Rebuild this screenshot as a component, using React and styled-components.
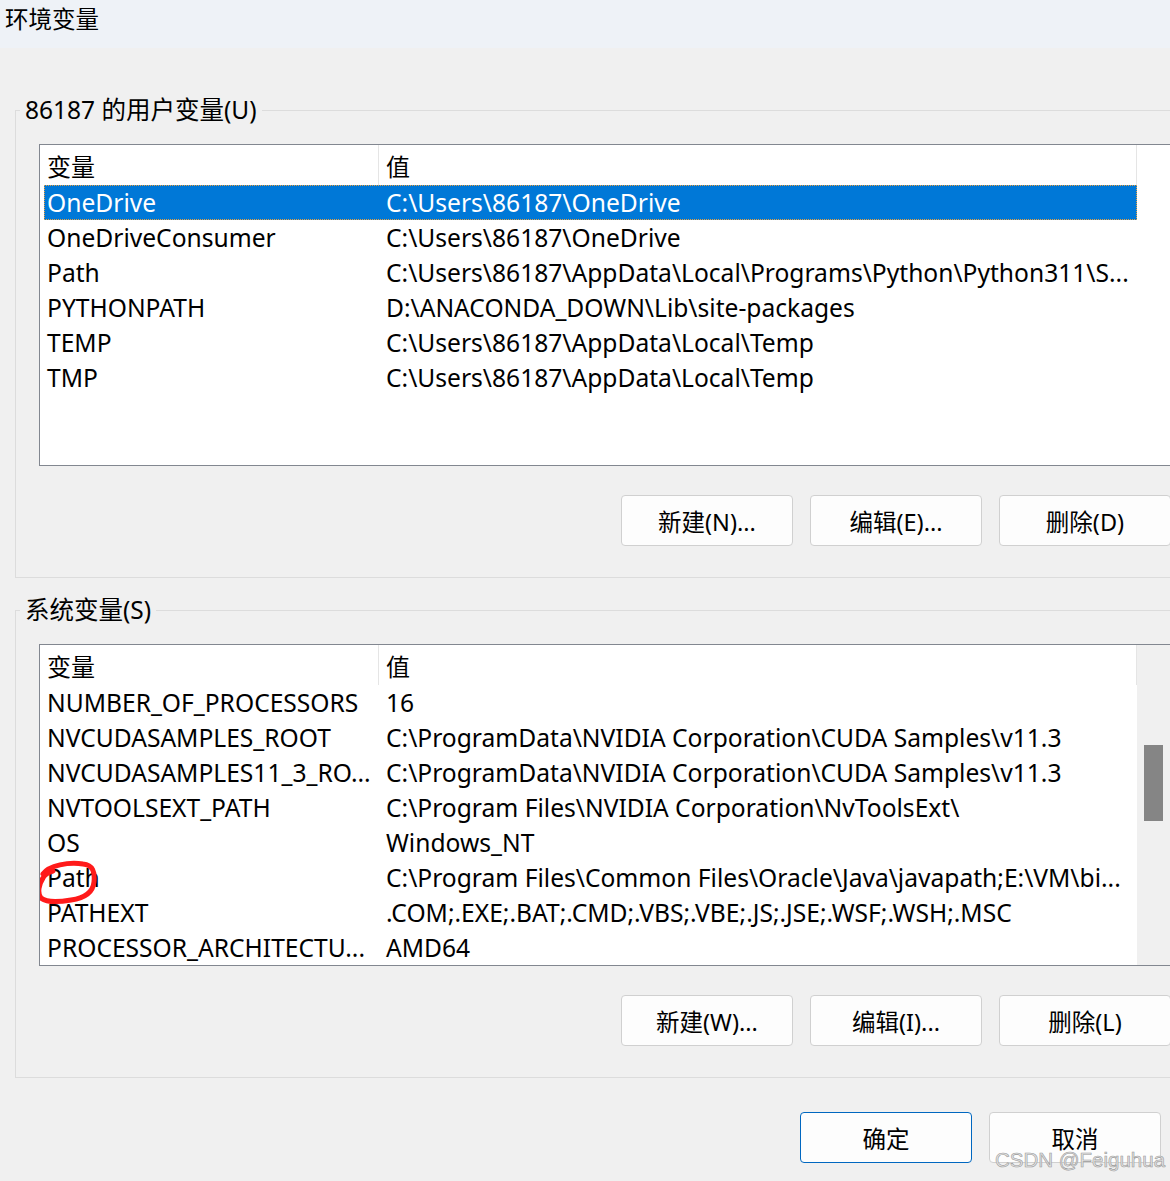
import React from 'react';
import styled, { createGlobalStyle } from 'styled-components';

const GlobalStyle = createGlobalStyle`
  html, body {
    margin: 0;
    padding: 0;
    background: #f0f0f0;
    overflow: hidden;
  }
  body {
    font-family: "Noto Sans", "Noto Sans CJK SC", sans-serif;
    color: #000;
  }
`;

const Window = styled.div`
  position: relative;
  width: 1200px;
  height: 1181px;
  background: #f0f0f0;
`;

const TitleBar = styled.div`
  height: 48px;
  box-sizing: border-box;
  background: #eef2f7;
  padding: 2px 0 0 5px;
  font-size: 23.5px;
  line-height: 32px;
  font-family: "Noto Sans CJK SC", sans-serif;
`;

const GroupBox = styled.fieldset`
  margin: ${p => p.$top}px 5px 0 15px;
  padding: 18px 23px 31px 23px;
  border: 1px solid #dcdcdc;
  border-radius: 0;
  min-width: 0;
`;

const Legend = styled.legend`
  font-size: 24.5px;
  line-height: 32px;
  padding: 0 5px;
  margin-left: -19px;
`;

const ListView = styled.div`
  height: 322px;
  box-sizing: border-box;
  border: 1px solid #828790;
  background: #fff;
  display: flex;
  overflow: hidden;
`;

const Table = styled.div`
  width: 1097px;
  padding-left: 4px;
  box-sizing: border-box;
  flex-shrink: 0;
`;

const HeaderRow = styled.div`
  display: grid;
  grid-template-columns: 335px 1fr;
  height: 40px;
`;

const HeaderCell = styled.div`
  display: flex;
  align-items: center;
  padding-left: ${p => (p.$first ? 3 : 7)}px;
  border-right: 1px solid #e5e5e5;
  font-size: 24px;
  font-family: "Noto Sans CJK SC", sans-serif;
`;

const Row = styled.div`
  display: grid;
  grid-template-columns: 335px 1fr;
  height: 35px;
  box-sizing: border-box;
  background: ${p => (p.$selected ? '#0078d7' : 'transparent')};
  color: ${p => (p.$selected ? '#fff' : '#000')};
  outline: ${p => (p.$selected ? '1px dotted #e8a040' : 'none')};
  outline-offset: -1px;
`;

const Cell = styled.div`
  position: relative;
  display: flex;
  align-items: center;
  padding-left: ${p => (p.$first ? 3 : 7)}px;
  font-size: 24.6px;
  white-space: nowrap;
  overflow: ${p => (p.$first ? 'visible' : 'hidden')};
`;

const Gutter = styled.div`
  flex: 1;
  background: ${p => (p.$scroll ? '#f0f0f0' : '#fff')};
  display: flex;
  justify-content: center;
`;

const Thumb = styled.div`
  margin-top: 100px;
  width: 19px;
  height: 76px;
  background: #858585;
`;

const ButtonRow = styled.div`
  display: flex;
  justify-content: flex-end;
  gap: 17px;
  margin-top: ${p => p.$top}px;
  padding-right: ${p => p.$right || 0}px;
`;

const Button = styled.button`
  width: 172px;
  height: 51px;
  box-sizing: border-box;
  background: #fdfdfd;
  border: 1px solid ${p => (p.$primary ? '#0067c0' : '#d0d0d0')};
  border-radius: 4px;
  font-family: "Noto Sans", "Noto Sans CJK SC", sans-serif;
  font-size: 23.5px;
  color: #000;
  padding: 0;
`;

const Circle = styled.svg`
  position: absolute;
  left: -9px;
  top: 0px;
  pointer-events: none;
`;

const Watermark = styled.div`
  position: absolute;
  left: 995px;
  top: 1148px;
  font-family: "Liberation Sans", sans-serif;
  font-size: 20.5px;
  color: #e4e4e4;
  -webkit-text-stroke: 0.6px #9a9a9a;
`;

const userVars = [
  ['OneDrive', 'C:\\Users\\86187\\OneDrive', true],
  ['OneDriveConsumer', 'C:\\Users\\86187\\OneDrive'],
  ['Path', 'C:\\Users\\86187\\AppData\\Local\\Programs\\Python\\Python311\\S...'],
  ['PYTHONPATH', 'D:\\ANACONDA_DOWN\\Lib\\site-packages'],
  ['TEMP', 'C:\\Users\\86187\\AppData\\Local\\Temp'],
  ['TMP', 'C:\\Users\\86187\\AppData\\Local\\Temp'],
];

const sysVars = [
  ['NUMBER_OF_PROCESSORS', '16'],
  ['NVCUDASAMPLES_ROOT', 'C:\\ProgramData\\NVIDIA Corporation\\CUDA Samples\\v11.3'],
  ['NVCUDASAMPLES11_3_RO...', 'C:\\ProgramData\\NVIDIA Corporation\\CUDA Samples\\v11.3'],
  ['NVTOOLSEXT_PATH', 'C:\\Program Files\\NVIDIA Corporation\\NvToolsExt\\'],
  ['OS', 'Windows_NT'],
  ['Path', 'C:\\Program Files\\Common Files\\Oracle\\Java\\javapath;E:\\VM\\bi...', false, true],
  ['PATHEXT', '.COM;.EXE;.BAT;.CMD;.VBS;.VBE;.JS;.JSE;.WSF;.WSH;.MSC'],
  ['PROCESSOR_ARCHITECTU...', 'AMD64'],
];

// hand-drawn red ring round the "Path" entry
const RedCircle = () => (
  <Circle width="66" height="46" viewBox="0 0 66 46">
    <path
      d="M8 14 C14 5 34 2 48 4 C58 5 60 12 59 22 C58 32 50 38 36 40 C24 42 12 43 6 38 C2 33 4 24 8 18 C10 14 14 12 18 11"
      fill="none"
      stroke="#ff1a1a"
      strokeWidth="5"
      strokeLinecap="round"
      strokeLinejoin="round"
    />
  </Circle>
);

const VarList = ({ rows, scroll }) => (
  <ListView>
    <Table>
      <HeaderRow>
        <HeaderCell $first>变量</HeaderCell>
        <HeaderCell>值</HeaderCell>
      </HeaderRow>
      {rows.map(([name, value, selected, marked]) => (
        <Row key={name + value} $selected={selected}>
          <Cell $first>
            {name}
            {marked && <RedCircle />}
          </Cell>
          <Cell>{value}</Cell>
        </Row>
      ))}
    </Table>
    <Gutter $scroll={scroll}>{scroll && <Thumb />}</Gutter>
  </ListView>
);

export default function App() {
  return (
    <Window>
      <GlobalStyle />
      <TitleBar>环境变量</TitleBar>

      <GroupBox $top={46}>
        <Legend>86187 的用户变量(U)</Legend>
        <VarList rows={userVars} />
        <ButtonRow $top={29}>
          <Button>新建(N)...</Button>
          <Button>编辑(E)...</Button>
          <Button>删除(D)</Button>
        </ButtonRow>
      </GroupBox>

      <GroupBox $top={16}>
        <Legend>系统变量(S)</Legend>
        <VarList rows={sysVars} scroll />
        <ButtonRow $top={29}>
          <Button>新建(W)...</Button>
          <Button>编辑(I)...</Button>
          <Button>删除(L)</Button>
        </ButtonRow>
      </GroupBox>

      <ButtonRow $top={34} $right={39}>
        <Button $primary>确定</Button>
        <Button>取消</Button>
      </ButtonRow>

      <Watermark>CSDN @Feiguhua</Watermark>
    </Window>
  );
}
